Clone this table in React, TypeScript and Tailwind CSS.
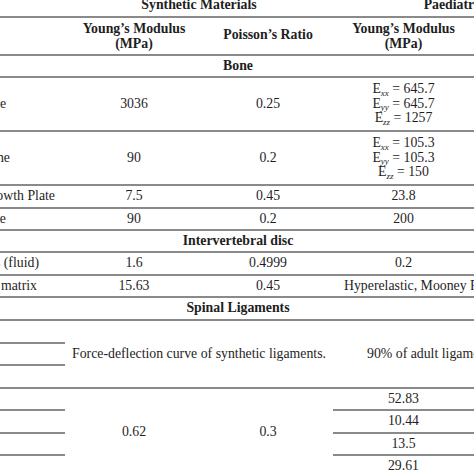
import React from 'react';

const line = 'border-b-2 border-[#8a8a8a]';
const cell = `${line} flex items-center justify-center text-center`;

function Label({ text, pr }: { text: string; pr: string }) {
  return (
    <div className={`${line} flex items-center justify-end ${pr}`}>
      <span className="shrink-0 whitespace-nowrap">{text}</span>
    </div>
  );
}

function E({ sub, value }: { sub: string; value: string }) {
  return (
    <div>
      E<sub className="text-[9px] italic leading-none">{sub}</sub> = {value}
    </div>
  );
}

export default function App() {
  return (
    <div className="w-[474px] h-[474px] overflow-hidden bg-white">
      <div
        className="-ml-[159px] -mt-[5px] grid w-[794px] grid-cols-[224px_138px_130px_141px_161px] grid-rows-[22.5px_38px_22.5px_54px_54px_23px_22px_22px_23px_22px_23px_23px_22px_23px_22px_23px_22px_22px] text-[13.8px] leading-[14.5px] text-[#1e1e1e]"
        style={{ fontFamily: '"Liberation Serif", "Times New Roman", serif' }}
      >
        {/* header */}
        <div className={line} />
        <div className={`${cell} col-span-2 font-bold`}>Synthetic Materials</div>
        <div className={`${cell} col-span-2 font-bold`}>Paediatric Materials</div>

        <div className={line} />
        <div className={`${cell} flex-col font-bold leading-[15px]`}>
          <div>Young’s Modulus</div>
          <div>(MPa)</div>
        </div>
        <div className={`${cell} font-bold`}>Poisson’s Ratio</div>
        <div className={`${cell} flex-col font-bold leading-[15px]`}>
          <div>Young’s Modulus</div>
          <div>(MPa)</div>
        </div>
        <div className={`${cell} font-bold`}>Poisson’s Ratio</div>

        {/* bone */}
        <div className={`${cell} col-span-5 font-bold`}>Bone</div>

        <Label text="Cortical Bone" pr="pr-[59px]" />
        <div className={cell}>3036</div>
        <div className={cell}>0.25</div>
        <div className={`${cell} flex-col`}>
          <E sub="xx" value="645.7" />
          <E sub="yy" value="645.7" />
          <E sub="zz" value="1257" />
        </div>
        <div className={cell}>0.3</div>

        <Label text="Cancellous Bone" pr="pr-[55px]" />
        <div className={cell}>90</div>
        <div className={cell}>0.2</div>
        <div className={`${cell} flex-col`}>
          <E sub="xx" value="105.3" />
          <E sub="yy" value="105.3" />
          <E sub="zz" value="150" />
        </div>
        <div className={cell}>0.2</div>

        <Label text="Growth Plate" pr="pr-[10px]" />
        <div className={cell}>7.5</div>
        <div className={cell}>0.45</div>
        <div className={cell}>23.8</div>
        <div className={cell}>0.4</div>

        <Label text="Cartilage" pr="pr-[59px]" />
        <div className={cell}>90</div>
        <div className={cell}>0.2</div>
        <div className={cell}>200</div>
        <div className={cell}>0.3</div>

        {/* disc */}
        <div className={`${cell} col-span-5 font-bold`}>Intervertebral disc</div>

        <Label text="Nucleus (fluid)" pr="pr-[26px]" />
        <div className={cell}>1.6</div>
        <div className={cell}>0.4999</div>
        <div className={cell}>0.2</div>
        <div className={cell}>0.4999</div>

        <Label text="Annulus matrix" pr="pr-[28px]" />
        <div className={cell}>15.63</div>
        <div className={cell}>0.45</div>
        <div className={`${line} col-span-2 flex items-center whitespace-nowrap pl-[11px]`}>
          Hyperelastic, Mooney Rivlin
        </div>

        {/* ligaments */}
        <div className={`${cell} col-span-5 font-bold`}>Spinal Ligaments</div>

        <div className={line} />
        <div className={`${cell} col-span-2 row-span-3`}>
          Force-deflection curve of synthetic ligaments.
        </div>
        <div className={`${line} col-span-2 row-span-3 flex items-center whitespace-nowrap pl-[34px]`}>
          90% of adult ligaments
        </div>
        <div className={line} />
        <div className={line} />

        <div className={line} />
        <div className={`${cell} row-span-4`}>0.62</div>
        <div className={`${cell} row-span-4`}>0.3</div>
        <div className={cell}>52.83</div>
        <div className={line} />
        <div className={line} />
        <div className={cell}>10.44</div>
        <div className={line} />
        <div className={line} />
        <div className={cell}>13.5</div>
        <div className={line} />
        <div className={line} />
        <div className={cell}>29.61</div>
        <div className={line} />
      </div>
    </div>
  );
}
